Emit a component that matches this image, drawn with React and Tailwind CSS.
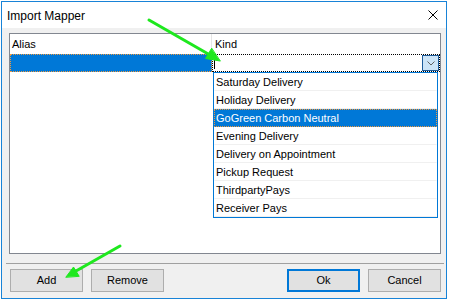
import React from "react";

const kinds = [
  "Saturday Delivery",
  "Holiday Delivery",
  "GoGreen Carbon Neutral",
  "Evening Delivery",
  "Delivery on Appointment",
  "Pickup Request",
  "ThirdpartyPays",
  "Receiver Pays",
];

function DialogButton({ label, primary }) {
  return (
    <button
      type="button"
      className={
        "w-[73px] h-[23px] bg-[#e1e1e1] text-[11px] leading-none text-black flex items-center justify-center " +
        (primary ? "border-2 border-[#0078d7]" : "border border-[#adadad]")
      }
    >
      {label}
    </button>
  );
}

function Arrows() {
  // green annotation arrows drawn over the dialog
  return (
    <svg className="absolute inset-0 pointer-events-none" width="450" height="302" viewBox="0 0 450 302">
      <g stroke="#1ee81e" strokeWidth="3" strokeLinecap="round" fill="#1ee81e">
        <line x1="149" y1="19" x2="210" y2="54" />
        <polygon points="220,60 205.5,57.5 211.5,47.5" strokeWidth="1" strokeLinejoin="round" />
        <line x1="120" y1="245" x2="76" y2="270" />
        <polygon points="66,276 73.5,266 79,275" strokeWidth="1" strokeLinejoin="round" />
      </g>
    </svg>
  );
}

export default function App() {
  return (
    <div className="relative w-[450px] h-[302px] bg-white font-['Liberation_Sans',Arial,sans-serif] text-black">
      <div className="ml-[1px] mt-[1px] w-[446px] h-[298px] border border-[#1883d7] flex flex-col">
        {/* title bar */}
        <div className="h-[26px] shrink-0 bg-white flex items-center justify-between pl-[5px] pr-[8px]">
          <span className="text-[12px] leading-[26px] pt-[1px]">Import Mapper</span>
          <svg width="10" height="10" viewBox="0 0 10 10">
            <path d="M0.5 0.5 L9.5 9.5 M9.5 0.5 L0.5 9.5" stroke="#000" strokeWidth="1" fill="none" />
          </svg>
        </div>

        {/* client area */}
        <div className="flex-1 bg-[#f0f0f0] flex flex-col pt-[5px]">
          <div className="relative ml-[7px] w-[432px] h-[221px] border border-[#828790] bg-white">
            <div className="flex h-[20px] text-[11px] leading-[20px]">
              <div className="w-[201px] pl-[2px]">Alias</div>
              <div className="w-px bg-[#e5e5e5]" />
              <div className="flex-1 pl-[3px]">Kind</div>
            </div>
            <div className="flex h-[18px]">
              <div className="w-[202px] bg-[#0078d7] border border-dotted border-[#f09a3e]" />
              <div className="flex-1 border border-dotted border-black flex">
                <div className="flex-1 flex items-center pl-[1px]">
                  <div className="w-px h-[12px] bg-black" />
                </div>
                <div className="w-[17px] h-full bg-[#cce4f7] border border-[#1c5b9a] flex items-center justify-center">
                  <svg width="8" height="5" viewBox="0 0 8 5">
                    <path d="M0.5 0.5 L4 4 L7.5 0.5" stroke="#606060" strokeWidth="1" fill="none" />
                  </svg>
                </div>
              </div>
            </div>

            {/* open dropdown list */}
            <div className="absolute left-[203px] top-[38px] w-[225px] border border-[#0078d7] bg-white">
              {kinds.map((k) => {
                const sel = k === "GoGreen Carbon Neutral";
                return (
                  <div
                    key={k}
                    className={
                      "h-[18px] pl-[1px] text-[11px] leading-[16px] border " +
                      (sel
                        ? "bg-[#0078d7] text-white border-dotted border-[#f09a3e]"
                        : "border-transparent border-b-[#f0f0f0]")
                    }
                  >
                    {k}
                  </div>
                );
              })}
            </div>
          </div>

          <div className="ml-[4px] mt-[9px] w-[438px] h-px bg-[#a0a0a0]" />

          <div className="flex mt-[5px] pl-[8px] pr-[5px]">
            <div className="flex gap-[8px]">
              <DialogButton label="Add" />
              <DialogButton label="Remove" />
            </div>
            <div className="flex gap-[8px] ml-auto">
              <DialogButton label="Ok" primary />
              <DialogButton label="Cancel" />
            </div>
          </div>
        </div>
      </div>
      <Arrows />
    </div>
  );
}
